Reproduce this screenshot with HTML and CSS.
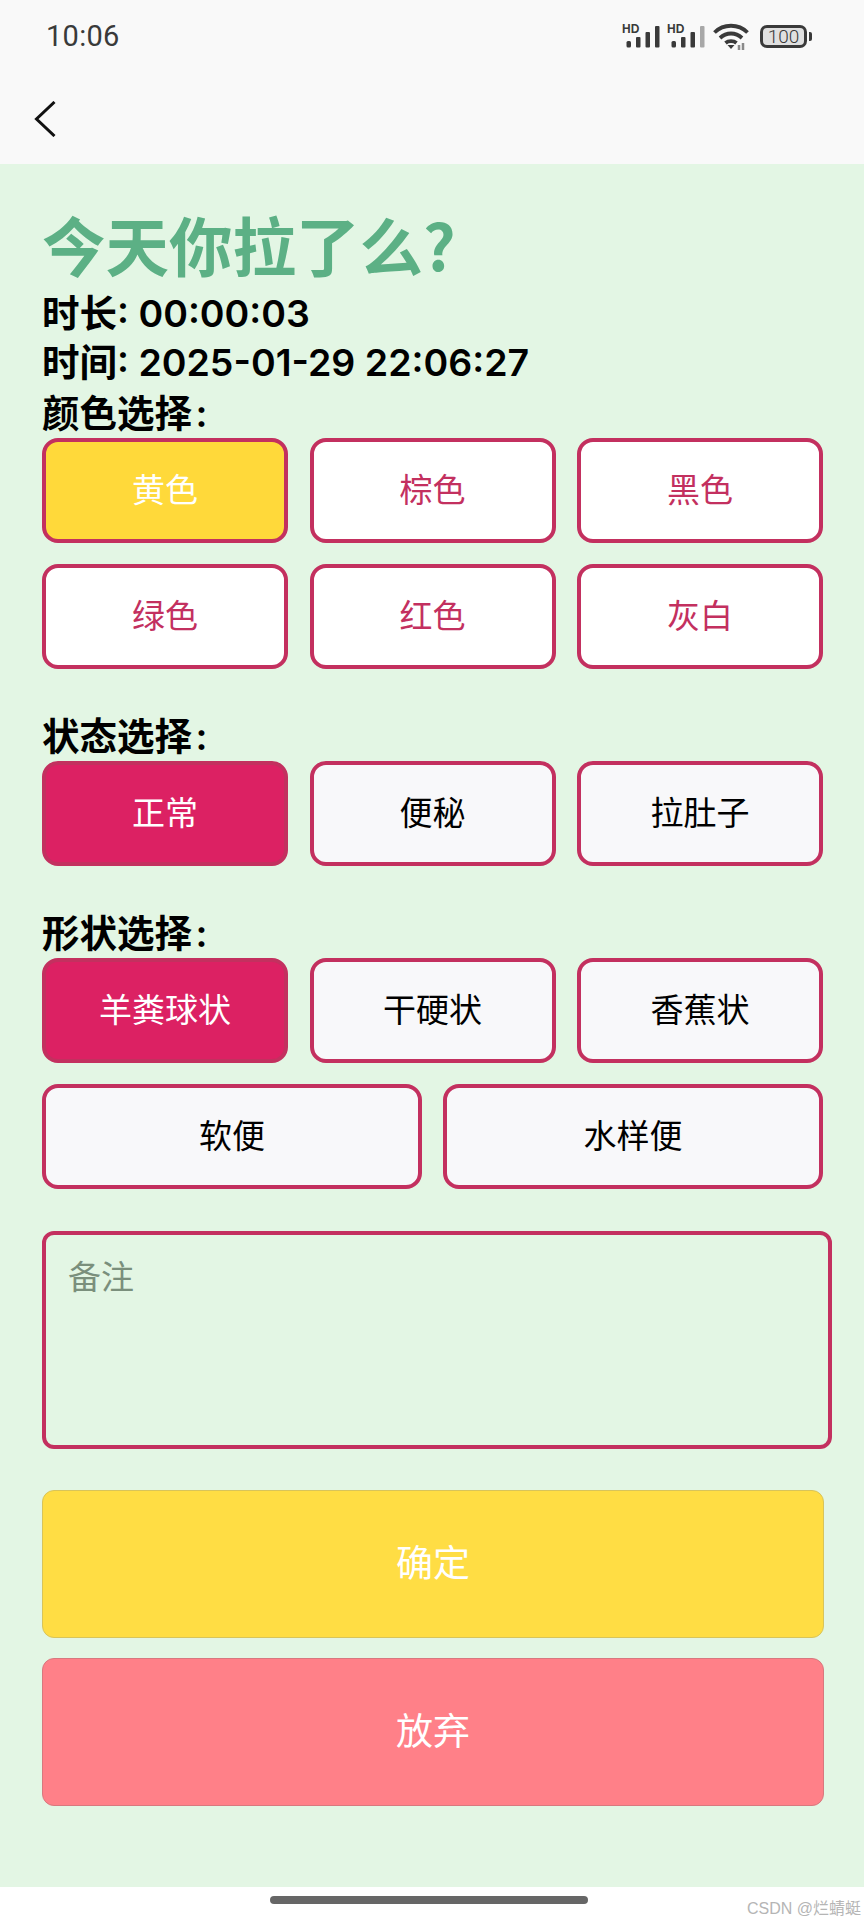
FILE: index.html
```html
<!DOCTYPE html>
<html lang="zh-CN">
<head>
<meta charset="utf-8">
<title>今天你拉了么?</title>
<link rel="stylesheet" href="styles.css">
</head>
<body>
<div class="phone">
  <header class="top">
    <div class="status">
      <span class="clock">10:06</span>
      <div class="sys">
        <svg class="sig" viewBox="0 -4 38 30"><text x="0" y="8" class="hd">HD</text><rect x="4.500" y="16" width="4.500" height="6.500" rx="1.500"/><rect x="14" y="12" width="4.500" height="10.500" rx="1"/><rect x="23.500" y="7" width="4.500" height="15.500" rx="1"/><rect x="33" y="1" width="4.500" height="21.500" rx="1"/></svg>
        <svg class="sig second" viewBox="0 -4 38 30"><text x="0" y="8" class="hd">HD</text><rect x="4.500" y="16" width="4.500" height="6.500" rx="1.500"/><rect x="14" y="12" width="4.500" height="10.500" rx="1"/><rect x="23.500" y="7" width="4.500" height="15.500" rx="1"/><rect class="dim" x="33" y="1" width="4.500" height="21.500" rx="1"/></svg>
        <svg class="wifi" viewBox="0 0 36 27" fill="none" stroke="#3a3a3a" stroke-width="3.800"><path d="M1.500 9.500C10.500 .5 25.500 .5 34.500 9.500"/><path d="M7 15C13.500 9 22.500 9 29 15"/><path d="M12.500 20C15.500 17.500 20.500 17.500 23.500 20"/><path d="M14.500 22h7l-3.500 4z" fill="#3a3a3a" stroke="none"/><path d="M26 22v5M30 20v7" stroke="#8a8a8a" stroke-width="2.500"/></svg>
        <div class="batt"><span class="batt-box">100</span><i class="batt-cap"></i></div>
      </div>
    </div>
    <div class="nav">
      <svg class="back" viewBox="0 0 22 36" fill="none" stroke="#111" stroke-width="3"><path d="M20.500 1L2.500 18L20.500 35"/></svg>
    </div>
  </header>

  <main class="form">
    <h1 class="title">今天你拉了么?</h1>
    <p class="info">时长: 00:00:03</p>
    <p class="info">时间: 2025-01-29 22:06:27</p>

    <h2 class="label">颜色选择 :</h2>
    <div class="grid three">
      <button class="opt color pick-yellow">黄色</button>
      <button class="opt color">棕色</button>
      <button class="opt color">黑色</button>
      <button class="opt color">绿色</button>
      <button class="opt color">红色</button>
      <button class="opt color">灰白</button>
    </div>

    <h2 class="label sect">状态选择 :</h2>
    <div class="grid three">
      <button class="opt pick">正常</button>
      <button class="opt">便秘</button>
      <button class="opt">拉肚子</button>
    </div>

    <h2 class="label sect">形状选择 :</h2>
    <div class="grid three">
      <button class="opt pick">羊粪球状</button>
      <button class="opt">干硬状</button>
      <button class="opt">香蕉状</button>
    </div>
    <div class="grid two">
      <button class="opt">软便</button>
      <button class="opt">水样便</button>
    </div>

    <div class="note">备注</div>

    <button class="action ok">确定</button>
    <button class="action quit">放弃</button>
  </main>

  <footer class="foot">
    <span class="home"></span>
    <span class="mark">CSDN @烂蜻蜓</span>
  </footer>
</div>
</body>
</html>
```

FILE: styles.css
```css
* { box-sizing: border-box; }
html, body { margin: 0; padding: 0; }
body { width: 864px; height: 1920px; overflow: hidden; background: #fff; font-family: "Inter", "Noto Sans CJK SC", sans-serif; }
.phone { width: 864px; height: 1920px; display: flex; flex-direction: column; }

.top { height: 164px; background: #f9f9f9; display: flex; flex-direction: column; }
.status { height: 72px; padding: 0 52px 0 46px; display: flex; align-items: center; justify-content: space-between; }
.clock { font-family: "Roboto", sans-serif; font-size: 29px; color: #3a3a3a; letter-spacing: .3px; }
.sys { display: flex; align-items: center; }
.sig { width: 38px; height: 30px; fill: #3a3a3a; }
.second { margin-left: 7px; }
.dim { fill: #a8a8a8; }
.hd { font: bold 12px "Liberation Sans", sans-serif; fill: #3a3a3a; }
.wifi { width: 36px; height: 27px; margin-left: 8px; }
.batt { display: flex; align-items: center; gap: 2px; margin-left: 11px; }
.batt-box { width: 47px; height: 23px; border: 3px solid #3a3a3a; border-radius: 7px; background: #e0e0e0; color: #3a3a3a; font: 300 19px/17px "Roboto", sans-serif; text-align: center; }
.batt-cap { width: 3px; height: 9px; background: #3a3a3a; border-radius: 0 2px 2px 0; }
.nav { flex: 1; padding: 29px 0 0 34px; }
.back { display: block; width: 22px; height: 36px; }

.form { height: 1723px; background: #e3f6e4; padding: 44px 40px 0 42px; }
.title { margin: 0 0 11px; font-size: 63.500px; line-height: 70px; font-weight: 700; color: #5cb085; font-family: "Noto Sans CJK SC", sans-serif; }
.info { margin: 0; font-size: 37.500px; line-height: 49px; font-weight: 600; color: #000; }
.label { margin: 3px 0 0; font-size: 37.500px; line-height: 48px; font-weight: 600; color: #000; word-spacing: -6px; }
.sect { margin-top: 44px; }

.grid { display: grid; column-gap: 21.500px; }
.three { grid-template-columns: repeat(3, 246px); row-gap: 21px; }
.two { grid-template-columns: repeat(2, 380px); column-gap: 21px; margin-top: 21px; }

.opt { height: 105px; padding: 0 0 6px; border: 4px solid #c3305f; border-radius: 16px; background: #f8f8fa; color: #000; font: 400 33px "Noto Sans CJK SC", sans-serif; }
.color { background: #fff; color: #c3305f; }
.pick-yellow { background: #ffd93a; color: #fff; }
.pick { background: #dc2163; color: #fff; }

.note { width: 790px; height: 218px; margin-top: 42px; padding: 17px 0 0 22px; border: 4px solid #c3305f; border-radius: 12px; color: #7a8f7c; font: 400 33px/46px "Noto Sans CJK SC", sans-serif; }

.action { display: block; width: 782px; height: 148px; padding: 0 0 7px; border: 1px solid #d8c45a; border-radius: 12px; color: #fff; font: 400 37px "Noto Sans CJK SC", sans-serif; }
.ok { margin-top: 41px; background: #ffdd44; }
.quit { margin-top: 20px; background: #ff8088; border-color: #d8787e; }

.foot { height: 33px; background: #fff; position: relative; }
.home { display: block; width: 318px; height: 8px; margin: 9px 0 0 270px; border-radius: 4px; background: #666; }
.mark { position: absolute; right: 3px; top: 8px; font: 16px "Liberation Sans", "Noto Sans CJK SC", sans-serif; color: #b5b5b5; }
```
